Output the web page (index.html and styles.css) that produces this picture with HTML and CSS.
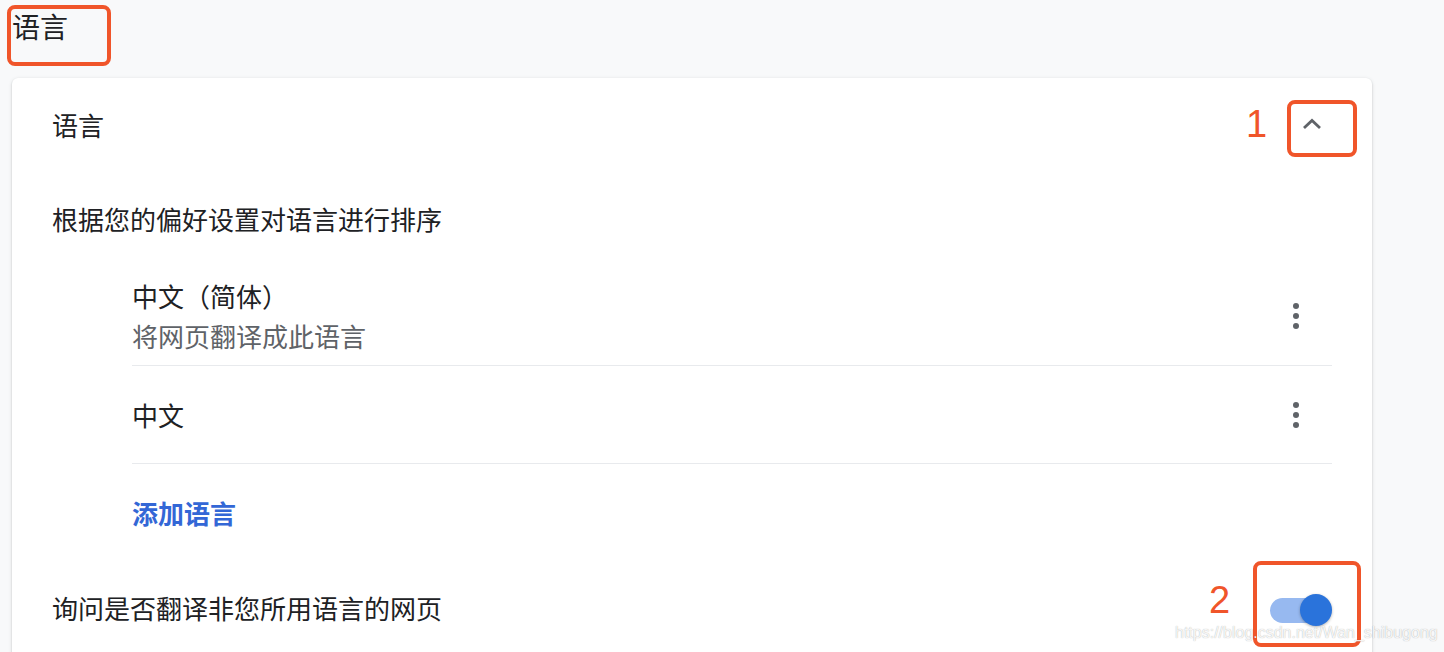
FILE: index.html
```html
<!DOCTYPE html>
<html lang="zh-CN">
<head>
    <meta charset="UTF-8">
    <meta name="viewport" content="width=device-width, initial-scale=1.0">
    <title>语言 - 设置</title>
    <link rel="stylesheet" href="styles.css">
</head>
<body>
    <div class="page">
        <h1 class="page-title">语言</h1>

        <div class="card">
            <div class="card-header">
                <span class="card-title">语言</span>
                <button class="icon-btn expand-btn" aria-label="收起">
                    <svg width="20" height="12" viewBox="0 0 20 12">
                        <path d="M2 10 L10 2.5 L18 10" fill="none" stroke="#5f6368" stroke-width="2.8"/>
                    </svg>
                </button>
            </div>

            <div class="section-label">根据您的偏好设置对语言进行排序</div>

            <div class="lang-list">
                <div class="lang-row">
                    <div class="lang-text">
                        <div class="lang-name">中文（简体）</div>
                        <div class="lang-sub">将网页翻译成此语言</div>
                    </div>
                    <button class="icon-btn kebab" aria-label="更多操作"><span></span><span></span><span></span></button>
                </div>
                <div class="lang-row">
                    <div class="lang-text">
                        <div class="lang-name">中文</div>
                    </div>
                    <button class="icon-btn kebab" aria-label="更多操作"><span></span><span></span><span></span></button>
                </div>
                <div class="add-row">
                    <a href="#" class="add-link">添加语言</a>
                </div>
            </div>

            <div class="setting-row">
                <span>询问是否翻译非您所用语言的网页</span>
                <div class="toggle on">
                    <div class="toggle-track"></div>
                    <div class="toggle-knob"></div>
                </div>
            </div>
        </div>

        <!-- annotations drawn on top of the screenshot -->
        <div class="mark mark-title"></div>
        <div class="mark mark-expand"></div>
        <div class="mark mark-toggle"></div>
        <div class="mark-num num-1">1</div>
        <div class="mark-num num-2">2</div>
        <div class="watermark">https://blog.csdn.net/Wan_shibugong</div>
    </div>
</body>
</html>
```

FILE: styles.css
```css
* {
    margin: 0;
    padding: 0;
    box-sizing: border-box;
}

html, body {
    height: 100%;
    overflow: hidden;
}

body {
    font-family: "Noto Sans CJK SC", "Noto Sans", sans-serif;
    background-color: #f8f9fa;
    color: #202124;
}

.page {
    position: relative;
    height: 100%;
    padding: 10px 0 0 12px;
}

.page-title {
    font-size: 28px;
    font-weight: normal;
    line-height: 32px;
    height: 32px;
    margin-bottom: 36px;
}

.card {
    width: 1360px;
    height: 640px;
    background: #fff;
    border-radius: 6px;
    box-shadow: 0 1px 2px rgba(60, 64, 67, 0.25), 0 1px 4px rgba(60, 64, 67, 0.1);
}

.card-header {
    height: 92px;
    display: flex;
    align-items: center;
    justify-content: space-between;
    padding: 0 36px 0 40px;
}

.card-title {
    font-size: 26px;
}

.icon-btn {
    width: 48px;
    height: 48px;
    border: none;
    background: none;
    display: flex;
    align-items: center;
    justify-content: center;
    cursor: pointer;
}

.section-label {
    height: 96px;
    display: flex;
    align-items: center;
    padding-left: 40px;
    font-size: 26px;
}

.lang-list {
    padding: 0 40px 0 120px;
}

.lang-row {
    display: flex;
    align-items: center;
    justify-content: space-between;
    height: 98px;
    border-bottom: 1px solid #e8eaed;
}

.lang-row:first-child {
    height: 100px;
}

.lang-name {
    font-size: 26px;
    line-height: 40px;
}

.lang-sub {
    font-size: 26px;
    line-height: 40px;
    color: #5f6368;
}

.kebab {
    flex-direction: column;
    gap: 4px;
    margin-right: 12px;
}

.kebab span {
    width: 6px;
    height: 6px;
    border-radius: 50%;
    background: #5f6368;
}

.add-row {
    height: 96px;
    display: flex;
    align-items: center;
}

.add-link {
    font-size: 26px;
    font-weight: bold;
    color: #3367d6;
    text-decoration: none;
}

.setting-row {
    height: 94px;
    display: flex;
    align-items: center;
    justify-content: space-between;
    padding: 0 40px;
    font-size: 26px;
}

.toggle {
    position: relative;
    width: 62px;
    height: 32px;
    margin-top: 6px;
}

.toggle-track {
    position: absolute;
    left: 0;
    top: 4px;
    width: 56px;
    height: 25px;
    border-radius: 13px;
    background: #97b9f0;
}

.toggle-knob {
    position: absolute;
    right: 0;
    top: 0;
    width: 32px;
    height: 32px;
    border-radius: 50%;
    background: #2a73db;
    box-shadow: 0 1px 3px rgba(0, 0, 0, 0.3);
}

/* red annotation boxes */
.mark {
    position: absolute;
    border: 4px solid #f0552a;
    border-radius: 8px;
}

.mark-title {
    left: 7px;
    top: 5px;
    width: 104px;
    height: 61px;
}

.mark-expand {
    left: 1287px;
    top: 100px;
    width: 70px;
    height: 57px;
}

.mark-toggle {
    left: 1253px;
    top: 561px;
    width: 108px;
    height: 86px;
}

.mark-num {
    position: absolute;
    font-family: "Liberation Sans", Arial, sans-serif;
    font-size: 38px;
    line-height: 38px;
    color: #f0552a;
}

.num-1 {
    left: 1246px;
    top: 105px;
}

.num-2 {
    left: 1209px;
    top: 581px;
}

.watermark {
    position: absolute;
    left: 1175px;
    top: 624px;
    font-family: "Liberation Sans", Arial, sans-serif;
    font-size: 16px;
    color: rgba(255, 255, 255, 0.9);
    text-shadow: 0 0 1px rgba(0, 0, 0, 0.35);
    white-space: nowrap;
}
```
